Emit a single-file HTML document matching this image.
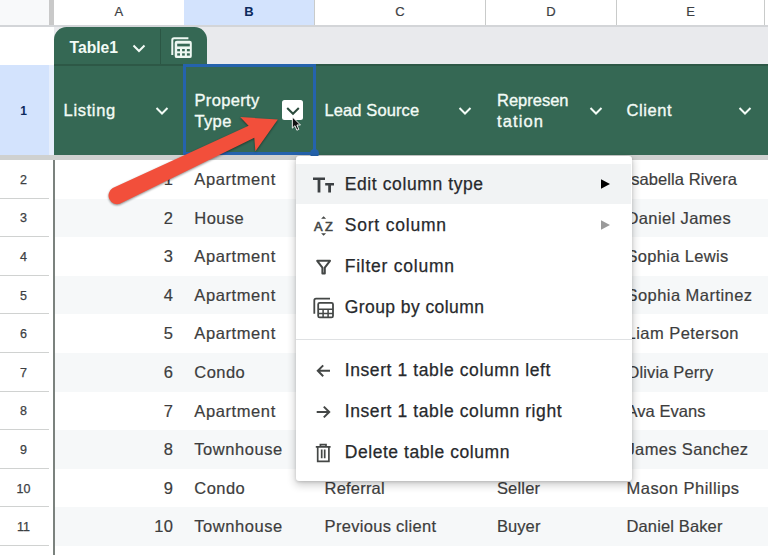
<!DOCTYPE html>
<html lang="en">
<head>
<meta charset="utf-8">
<title>Table column menu</title>
<style>
html,body{margin:0;padding:0;}
body{width:768px;height:555px;overflow:hidden;background:#fff;position:relative;font-family:"Liberation Sans",sans-serif;color:#3c4043;}
.a{position:absolute;}
.colh{position:absolute;top:0;height:25px;line-height:23px;text-align:center;font-size:13px;color:#3c4043;-webkit-text-stroke:0.2px #3c4043;background:#fff;border-right:1px solid #c9cbca;box-sizing:border-box;}
.rowh{position:absolute;left:0;width:49px;font-size:12.5px;color:#3c4043;-webkit-text-stroke:0.25px #3c4043;box-sizing:border-box;border-bottom:1px solid #d0d2d1;background:#fff;}
.rowh span{position:absolute;left:0;top:0.8px;width:47px;height:38px;line-height:38px;text-align:center;}
.band{position:absolute;left:55px;width:713px;background:#f6f8f9;}
.t{position:absolute;white-space:nowrap;font-size:16.5px;letter-spacing:0.45px;color:#3d3d3d;height:38.6px;line-height:38.6px;-webkit-text-stroke:0.2px #3d3d3d;}
.h{position:absolute;white-space:nowrap;font-size:16.5px;color:#f3fbf6;letter-spacing:0.2px;line-height:21px;-webkit-text-stroke:0.35px #f3fbf6;}
.m{position:absolute;left:344.7px;-webkit-text-stroke:0.25px #27292c;white-space:nowrap;font-size:17.5px;letter-spacing:0.7px;color:#27292c;height:41px;line-height:41px;}
</style>
</head>
<body>

<!-- column headers -->
<div class="a" style="left:0;top:0;width:768px;height:26px;background:#fff;border-bottom:1px solid #d5d7d6;box-sizing:border-box;"></div>
<div class="a" style="left:0;top:0;width:49px;height:25px;background:#f8f9fa;"></div>
<div class="colh" style="left:53px;width:132.5px;">A</div>
<div class="colh" style="left:184px;width:131px;background:#d3e3fd;color:#0b2a5c;font-weight:bold;-webkit-text-stroke:0;">B</div>
<div class="colh" style="left:315px;width:171px;">C</div>
<div class="colh" style="left:486px;width:131px;">D</div>
<div class="colh" style="left:617px;width:148px;">E</div>
<div class="a" style="left:48.5px;top:0;width:5px;height:26px;background:#c9c9c9;"></div>
<div class="a" style="left:0;top:25px;width:768px;height:1.8px;background:#d3d5d8;"></div>

<!-- grey strip right of table tab -->
<div class="a" style="left:54px;top:26.8px;width:714px;height:38.2px;background:#e9eaed;"></div>

<!-- row headers -->
<div class="rowh" style="top:65px;height:89.5px;width:54px;background:#e6eefc;border-bottom:0;"></div>
<div class="rowh" style="top:65px;height:89.5px;width:49px;background:#d3e3fd;border-bottom:0;"><span style="top:26.5px;font-weight:bold;color:#0b2a5c;font-size:12px;-webkit-text-stroke:0;">1</span></div>

<!-- frozen row bar -->
<div class="a" style="left:0;top:154.5px;width:768px;height:5px;background:#cfd1d0;"></div>

<div class="rowh" style="top:160.0px;height:38.6px;"><span>2</span></div>
<div class="rowh" style="top:198.6px;height:38.6px;"><span>3</span></div>
<div class="rowh" style="top:237.2px;height:38.6px;"><span>4</span></div>
<div class="rowh" style="top:275.8px;height:38.6px;"><span>5</span></div>
<div class="rowh" style="top:314.4px;height:38.6px;"><span>6</span></div>
<div class="rowh" style="top:353.0px;height:38.6px;"><span>7</span></div>
<div class="rowh" style="top:391.6px;height:38.6px;"><span>8</span></div>
<div class="rowh" style="top:430.2px;height:38.6px;"><span>9</span></div>
<div class="rowh" style="top:468.8px;height:38.6px;"><span>10</span></div>
<div class="rowh" style="top:507.4px;height:38.6px;"><span>11</span></div>

<!-- alternating bands -->
<div class="band" style="top:198.6px;height:38.6px;"></div>
<div class="band" style="top:275.8px;height:38.6px;"></div>
<div class="band" style="top:353.0px;height:38.6px;"></div>
<div class="band" style="top:430.2px;height:38.6px;"></div>
<div class="band" style="top:507.4px;height:38.6px;"></div>

<!-- table left border -->
<div class="a" style="left:53.4px;top:159.5px;width:2.1px;height:396px;background:#7b827e;"></div>

<!-- table tab -->
<div class="a" style="left:54.3px;top:26.8px;width:152.7px;height:40px;background:#356854;border-radius:12.5px 12.5px 0 0;"></div>
<div class="a" style="left:160px;top:29px;width:1.2px;height:35px;background:#2b5644;"></div>
<div class="h" style="left:69.5px;top:36.5px;font-weight:bold;-webkit-text-stroke:0;font-size:15.7px;letter-spacing:0;">Table1</div>
<svg class="a" style="left:131px;top:40.5px;" width="16" height="14" viewBox="0 0 16 14"><path d="M2.5 4.5 L8 10 L13.5 4.5" fill="none" stroke="#f3fbf6" stroke-width="2"/></svg>
<svg class="a" style="left:0;top:0;" width="768" height="70" viewBox="0 0 768 70">
<path d="M172.3 55 V40 Q172.3 38.2 174.1 38.2 H188.4" fill="none" stroke="#eef8f2" stroke-width="2"/>
<rect x="174.7" y="40.7" width="17.1" height="17.4" rx="2.2" fill="#eef8f2"/>
<rect x="177.2" y="43.7" width="12.6" height="2.7" fill="#356854"/>
<rect x="177.2" y="49" width="2.8" height="2.3" fill="#356854"/><rect x="182.1" y="49" width="2.7" height="2.3" fill="#356854"/><rect x="186.9" y="49" width="2.9" height="2.3" fill="#356854"/>
<rect x="177.2" y="53.3" width="2.8" height="2.3" fill="#356854"/><rect x="182.1" y="53.3" width="2.7" height="2.3" fill="#356854"/><rect x="186.9" y="53.3" width="2.9" height="2.3" fill="#356854"/>
</svg>

<!-- green header row -->
<div class="a" style="left:54px;top:64.5px;width:714px;height:90px;background:#356854;"></div>
<div class="a" style="left:54px;top:64.3px;width:714px;height:1.4px;background:#2d5846;"></div>
<div class="h" style="left:63.6px;top:100px;letter-spacing:0.65px;">Listing</div>
<div class="h" style="left:194.5px;top:90px;letter-spacing:0.35px;">Property<br>Type</div>
<div class="h" style="left:324.5px;top:100px;letter-spacing:0.1px;">Lead Source</div>
<div class="h" style="left:497px;top:90px;letter-spacing:0px;">Represen<br><span style="letter-spacing:1.1px">tation</span></div>
<div class="h" style="left:626.5px;top:100px;letter-spacing:0.6px;">Client</div>

<svg class="a" style="left:154.2px;top:104px;" width="16" height="14" viewBox="0 0 16 14"><path d="M2.5 4 L8 9.5 L13.5 4" fill="none" stroke="#f3fbf6" stroke-width="2"/></svg>
<svg class="a" style="left:457px;top:104px;" width="16" height="14" viewBox="0 0 16 14"><path d="M2.5 4 L8 9.5 L13.5 4" fill="none" stroke="#f3fbf6" stroke-width="2"/></svg>
<svg class="a" style="left:587.5px;top:104px;" width="16" height="14" viewBox="0 0 16 14"><path d="M2.5 4 L8 9.5 L13.5 4" fill="none" stroke="#f3fbf6" stroke-width="2"/></svg>
<svg class="a" style="left:736.5px;top:104px;" width="16" height="14" viewBox="0 0 16 14"><path d="M2.5 4 L8 9.5 L13.5 4" fill="none" stroke="#f3fbf6" stroke-width="2"/></svg>

<!-- selected cell border -->
<div class="a" style="left:183.2px;top:63.8px;width:132.8px;height:91.6px;border:3.4px solid #2563ad;box-sizing:border-box;"></div>

<!-- dropdown button -->
<div class="a" style="left:282.2px;top:99.6px;width:21px;height:20px;background:#fff;border-radius:2.5px;"></div>
<svg class="a" style="left:284.7px;top:103.6px;" width="16" height="14" viewBox="0 0 16 14"><path d="M2.2 4 L8 9.8 L13.8 4" fill="none" stroke="#2b4a3c" stroke-width="2"/></svg>

<!-- data: listing numbers -->
<div class="t" style="right:594.5px;top:159.9px;">1</div>
<div class="t" style="right:594.5px;top:198.5px;">2</div>
<div class="t" style="right:594.5px;top:237.1px;">3</div>
<div class="t" style="right:594.5px;top:275.7px;">4</div>
<div class="t" style="right:594.5px;top:314.3px;">5</div>
<div class="t" style="right:594.5px;top:352.9px;">6</div>
<div class="t" style="right:594.5px;top:391.5px;">7</div>
<div class="t" style="right:594.5px;top:430.1px;">8</div>
<div class="t" style="right:594.5px;top:468.7px;">9</div>
<div class="t" style="right:594.5px;top:507.3px;">10</div>

<!-- data: property type -->
<div class="t" style="left:194.3px;top:159.9px;letter-spacing:0.6px;">Apartment</div>
<div class="t" style="left:194.3px;top:198.5px;letter-spacing:0.45px;">House</div>
<div class="t" style="left:194.3px;top:237.1px;letter-spacing:0.6px;">Apartment</div>
<div class="t" style="left:194.3px;top:275.7px;letter-spacing:0.6px;">Apartment</div>
<div class="t" style="left:194.3px;top:314.3px;letter-spacing:0.6px;">Apartment</div>
<div class="t" style="left:194.3px;top:352.9px;letter-spacing:0.45px;">Condo</div>
<div class="t" style="left:194.3px;top:391.5px;letter-spacing:0.6px;">Apartment</div>
<div class="t" style="left:194.3px;top:430.1px;letter-spacing:0.56px;">Townhouse</div>
<div class="t" style="left:194.3px;top:468.7px;letter-spacing:0.45px;">Condo</div>
<div class="t" style="left:194.3px;top:507.3px;letter-spacing:0.56px;">Townhouse</div>

<!-- data: lead source / representation (visible rows) -->
<div class="t" style="left:324.6px;top:468.7px;letter-spacing:0.19px;">Referral</div>
<div class="t" style="left:324.6px;top:507.3px;letter-spacing:0.3px;">Previous client</div>
<div class="t" style="left:496.9px;top:468.7px;letter-spacing:0.2px;">Seller</div>
<div class="t" style="left:496.9px;top:507.3px;letter-spacing:0.1px;">Buyer</div>

<!-- data: client -->
<div class="t" style="left:626.5px;top:159.9px;letter-spacing:0.09px;">Isabella Rivera</div>
<div class="t" style="left:626.5px;top:198.5px;letter-spacing:0.38px;">Daniel James</div>
<div class="t" style="left:626.5px;top:237.1px;letter-spacing:0.33px;">Sophia Lewis</div>
<div class="t" style="left:626.5px;top:275.7px;letter-spacing:0.45px;">Sophia Martinez</div>
<div class="t" style="left:626.5px;top:314.3px;letter-spacing:0.47px;">Liam Peterson</div>
<div class="t" style="left:626.5px;top:352.9px;letter-spacing:0.13px;">Olivia Perry</div>
<div class="t" style="left:626.5px;top:391.5px;letter-spacing:0.06px;">Ava Evans</div>
<div class="t" style="left:626.5px;top:430.1px;letter-spacing:0.35px;">James Sanchez</div>
<div class="t" style="left:626.5px;top:468.7px;letter-spacing:0.48px;">Mason Phillips</div>
<div class="t" style="left:626.5px;top:507.3px;letter-spacing:0.13px;">Daniel Baker</div>

<!-- red arrow -->
<svg class="a" style="left:0;top:0;filter:drop-shadow(0.5px 1.5px 1.2px rgba(0,0,0,0.45));" width="768" height="555" viewBox="0 0 768 555">
<path d="M277.8 119.4 L240.2 117.1 L248.6 125.7 L112.8 188.1 A8.6 8.6 0 0 0 119.8 203.7 L254.3 137.7 L255.4 151.3 Z" fill="#f24f3b"/>
</svg>

<!-- selection handle -->
<div class="a" style="left:309.5px;top:149px;width:9.4px;height:9.4px;border-radius:50%;background:#2563ad;"></div>

<!-- popup menu -->
<div class="a" style="left:296px;top:155.7px;width:336px;height:325.5px;background:#fff;border-radius:3px;box-shadow:0 3px 9px 1px rgba(0,0,0,0.2),0 1px 3px rgba(0,0,0,0.14);"></div>
<div class="a" style="left:296px;top:164.3px;width:335px;height:39.8px;background:#f1f3f4;"></div>
<div class="a" style="left:296px;top:339px;width:336px;height:1px;background:#dfe1e3;"></div>
<div class="m" style="top:163.9px;letter-spacing:0.6px;">Edit column type</div>
<div class="m" style="top:204.9px;letter-spacing:0.8px;">Sort column</div>
<div class="m" style="top:245.9px;letter-spacing:0.76px;">Filter column</div>
<div class="m" style="top:286.9px;letter-spacing:0.43px;">Group by column</div>
<div class="m" style="top:349.6px;letter-spacing:0.6px;">Insert 1 table column left</div>
<div class="m" style="top:390.6px;letter-spacing:0.6px;">Insert 1 table column right</div>
<div class="m" style="top:431.6px;letter-spacing:0.56px;">Delete table column</div>

<!-- submenu arrows -->
<svg class="a" style="left:600px;top:178px;" width="12" height="12" viewBox="0 0 12 12"><path d="M1 1.2 L10 6 L1 10.8 Z" fill="#000"/></svg>
<svg class="a" style="left:600px;top:219px;" width="12" height="12" viewBox="0 0 12 12"><path d="M1 1.2 L10 6 L1 10.8 Z" fill="#9a9a9a"/></svg>

<!-- menu icons -->
<svg class="a" style="left:0;top:0;" width="768" height="555" viewBox="0 0 768 555">
<!-- Tt -->
<path d="M313 177.4 H325 V180 H320.4 V192.4 H317.6 V180 H313 Z M325.2 183 H334 V185.5 H331 V192.4 H328.2 V185.5 H325.2 Z" fill="#3c4043"/>
<!-- AZ sort -->
<text x="313.9" y="230.7" font-family="Liberation Sans, sans-serif" font-size="12.8" fill="#444746" stroke="#444746" stroke-width="0.6">A</text>
<text x="325" y="230.7" font-family="Liberation Sans, sans-serif" font-size="12.8" fill="#444746" stroke="#444746" stroke-width="0.6">Z</text>
<path d="M321.1 218.8 L323.6 216.3 L326.1 218.8 Z M321.1 233.2 L323.6 235.7 L326.1 233.2 Z" fill="#444746"/>
<!-- filter -->
<path d="M317.2 260.8 H330 L324.8 267.6 V273.4 H322.4 V267.6 Z" fill="none" stroke="#444746" stroke-width="2" stroke-linejoin="round"/>
<!-- group -->
<path d="M314.3 313.7 V300.4 Q314.3 298.7 316 298.7 H330" fill="none" stroke="#444746" stroke-width="1.8"/>
<rect x="318.2" y="302.8" width="14.8" height="14.6" rx="1.5" fill="none" stroke="#444746" stroke-width="1.8"/>
<path d="M318.2 309.2 H333 M318.2 313.4 H333 M323.1 309.2 V317.4 M328.1 309.2 V317.4" fill="none" stroke="#444746" stroke-width="1.5"/>
<!-- arrow left -->
<path d="M330 370.8 H318.6 M323.2 365.4 L317.8 370.8 L323.2 376.2" fill="none" stroke="#444746" stroke-width="2"/>
<!-- arrow right -->
<path d="M316.7 412 H328.4 M323.8 406.6 L329.2 412 L323.8 417.4" fill="none" stroke="#444746" stroke-width="2"/>
<!-- trash -->
<path d="M315.8 446.8 H330.6 M320.4 446.6 V444.7 H326 V446.6 M317.7 447 V461.3 H328.9 V447 M321.7 449.6 V458.2 M324.7 449.6 V458.2" fill="none" stroke="#444746" stroke-width="1.7"/>
</svg>

<!-- mouse cursor -->
<svg class="a" style="left:291.3px;top:115.7px;" width="10.8" height="16.2" viewBox="0 0 12 18"><path d="M1.5 1 L1.5 13.5 L4.4 10.8 L6.5 15.8 L8.7 14.9 L6.6 10 L10.5 10 Z" fill="#111" stroke="#fff" stroke-width="1"/></svg>

</body>
</html>
